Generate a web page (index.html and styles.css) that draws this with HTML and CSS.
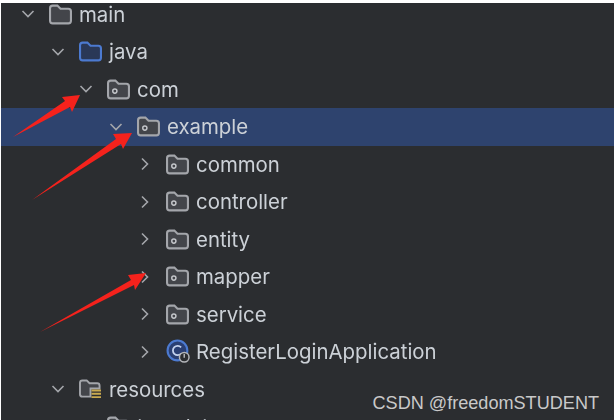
FILE: index.html
```html
<!DOCTYPE html>
<html lang="en">
<head>
    <meta charset="UTF-8">
    <meta name="viewport" content="width=device-width, initial-scale=1.0">
    <title>Project tree</title>
    <link rel="stylesheet" href="styles.css">
</head>
<body>

<svg class="defs" width="0" height="0">
    <symbol id="chevDown" viewBox="0 0 16 16"><path d="M2.5 5 L8 10.5 L13.5 5" fill="none" stroke="currentColor" stroke-width="1.6"/></symbol>
    <symbol id="chevRight" viewBox="0 0 16 16"><path d="M5 2.5 L10.5 8 L5 13.5" fill="none" stroke="currentColor" stroke-width="1.6"/></symbol>
    <symbol id="folder" viewBox="0 0 22 20"><path d="M1 4 Q1 1.5 3.5 1.5 H8 L11 4.5 H18.5 Q21 4.5 21 7 V16 Q21 18.5 18.5 18.5 H3.5 Q1 18.5 1 16 Z" fill="#43454a" stroke="#a4a6ab" stroke-width="2"/></symbol>
    <symbol id="folderBlue" viewBox="0 0 22 20"><path d="M1 4 Q1 1.5 3.5 1.5 H8 L11 4.5 H18.5 Q21 4.5 21 7 V16 Q21 18.5 18.5 18.5 H3.5 Q1 18.5 1 16 Z" fill="#2a3857" stroke="#4c7ad0" stroke-width="2"/></symbol>
    <symbol id="pkg" viewBox="0 0 22 20"><path d="M1 4 Q1 1.5 3.5 1.5 H8 L11 4.5 H18.5 Q21 4.5 21 7 V16 Q21 18.5 18.5 18.5 H3.5 Q1 18.5 1 16 Z" fill="#43454a" stroke="#a4a6ab" stroke-width="2"/><circle cx="7.5" cy="11.5" r="2" fill="none" stroke="#c4c6ca" stroke-width="1.4"/></symbol>
    <symbol id="res" viewBox="0 0 24 22"><path d="M1 4 Q1 1.5 3.5 1.5 H8 L11 4.5 H19 Q21.5 4.5 21.5 7 V10 H12 V18.5 H3.5 Q1 18.5 1 16 Z" fill="#43454a" stroke="#a4a6ab" stroke-width="2"/><path d="M13 12 H23 M13 15.5 H23 M13 19 H23" stroke="#c9a94f" stroke-width="2"/></symbol>
    <symbol id="app" viewBox="0 0 24 24"><circle cx="11" cy="11" r="9.5" fill="#2a3f73" stroke="#4c7ad0" stroke-width="2"/><path d="M14.5 8 A4.5 4.5 0 1 0 14.5 14" fill="none" stroke="#c4d2ee" stroke-width="1.7"/><circle cx="17.5" cy="17.5" r="4.6" fill="#2b2d30" stroke="#b4b6ba" stroke-width="1.4"/><path d="M17.5 14.5 V18" stroke="#b4b6ba" stroke-width="1.4"/></symbol>
</svg>

<div class="frame">
    <ul class="tree">
        <li class="row d0"><svg class="chev"><use href="#chevDown"/></svg><svg class="icon"><use href="#folder"/></svg><span>main</span></li>
        <li class="row d1"><svg class="chev"><use href="#chevDown"/></svg><svg class="icon"><use href="#folderBlue"/></svg><span>java</span></li>
        <li class="row d2"><svg class="chev"><use href="#chevDown"/></svg><svg class="icon"><use href="#pkg"/></svg><span>com</span></li>
        <li class="row d3 selected"><svg class="chev"><use href="#chevDown"/></svg><svg class="icon"><use href="#pkg"/></svg><span>example</span></li>
        <li class="row d4"><svg class="chev"><use href="#chevRight"/></svg><svg class="icon"><use href="#pkg"/></svg><span>common</span></li>
        <li class="row d4"><svg class="chev"><use href="#chevRight"/></svg><svg class="icon"><use href="#pkg"/></svg><span>controller</span></li>
        <li class="row d4"><svg class="chev"><use href="#chevRight"/></svg><svg class="icon"><use href="#pkg"/></svg><span>entity</span></li>
        <li class="row d4"><svg class="chev"><use href="#chevRight"/></svg><svg class="icon"><use href="#pkg"/></svg><span>mapper</span></li>
        <li class="row d4"><svg class="chev"><use href="#chevRight"/></svg><svg class="icon"><use href="#pkg"/></svg><span>service</span></li>
        <li class="row d4"><svg class="chev"><use href="#chevRight"/></svg><svg class="icon app"><use href="#app"/></svg><span>RegisterLoginApplication</span></li>
        <li class="row d1"><svg class="chev"><use href="#chevDown"/></svg><svg class="icon"><use href="#res"/></svg><span>resources</span></li>
        <li class="row d2"><svg class="chev"></svg><svg class="icon"><use href="#pkg"/></svg><span>templates</span></li>
    </ul>

    <!-- red arrows drawn over the screenshot -->
    <svg class="arrows" width="614" height="420" viewBox="0 0 614 420">
        <polygon points="13,137 65,101 62,97 80,95 72,112 70,107"/>
        <polygon points="32,200 116,139 113,134 132,133 123,149 121,144"/>
        <polygon points="40,332 131,280 128,275 146,273 135,290 134,285"/>
    </svg>

    <div class="mark">CSDN @freedomSTUDENT</div>
</div>

</body>
</html>
```

FILE: styles.css
```css
html, body {
    margin: 0;
    padding: 0;
    background-color: #fff;
    overflow: hidden;
}
.defs {
    position: absolute;
}
.frame {
    position: relative;
    width: 613px;
    height: 417px;
    margin: 3px 0 0 1px;
    background-color: #2b2d30;
    overflow: hidden;
}
.tree {
    list-style: none;
    margin: -7.5px 0 0 0;
    padding: 0;
    font-family: Inter, "Liberation Sans", sans-serif;
    font-size: 20.4px;
    color: #ccd1d7;
    filter: blur(0.5px);
}
.row {
    display: flex;
    align-items: center;
    height: 37.5px;
    box-sizing: border-box;
}
.selected {
    background-color: #2e436e;
}
.d0 { padding-left: 19px; }
.d1 { padding-left: 49px; }
.d2 { padding-left: 77px; }
.d3 { padding-left: 107px; }
.d4 { padding-left: 136px; }
.chev {
    width: 16px;
    height: 16px;
    margin-right: 13px;
    color: #a4a6ab;
}
.icon {
    width: 23px;
    height: 21px;
    margin-right: 7px;
}
.app {
    width: 25px;
    height: 25px;
    margin-right: 5px;
}
.arrows {
    position: absolute;
    left: -1px;
    top: -3px;
}
.arrows polygon {
    fill: #f5221c;
}
.mark {
    position: absolute;
    right: 15px;
    bottom: 6px;
    font-family: "Liberation Sans", Arial, sans-serif;
    font-size: 18.1px;
    color: #c9c9c9;
}
```
